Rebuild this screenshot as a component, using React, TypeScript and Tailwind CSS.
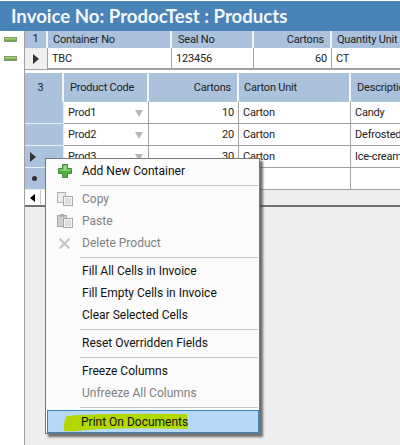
import { X } from 'lucide-react';

const font = { fontFamily: 'Roboto, sans-serif' };

function Minus() {
  return <div className="h-[5px] w-[13px] border border-[#7f9a6a] bg-gradient-to-b from-[#b5dc8c] to-[#5f9e3c]" />;
}

function Arrow() {
  return (
    <svg width="6" height="10" viewBox="0 0 6 10" className="block">
      <path d="M0 0 L6 5 L0 10 Z" fill="#333" />
    </svg>
  );
}

function Head({ w, align, pl, children }: { w: string; align?: string; pl?: string; children?: React.ReactNode }) {
  return (
    <div className={`${w} ${align ?? ''} ${pl ?? 'pl-[5px]'} shrink-0 flex items-center border-r-2 border-[#f1f4f8] bg-[#abc1dc] pt-px pr-[6px] whitespace-nowrap overflow-hidden`}>
      {children}
    </div>
  );
}

function Cell({ w, right, children }: { w: string; right?: boolean; children?: React.ReactNode }) {
  return (
    <div className={`${w} ${right ? 'justify-end pr-[4px]' : 'pl-[4px]'} shrink-0 flex items-center border-r border-b border-[#a0a0a0] bg-white pt-[2px] whitespace-nowrap overflow-hidden`}>
      {children}
    </div>
  );
}

function DetailRow({ code, cartons, unit, desc, mark }: { code?: string; cartons?: string; unit?: string; desc?: string; mark?: React.ReactNode }) {
  return (
    <div className="flex h-[22px]">
      <div className="flex w-[39px] shrink-0 items-center border-r border-b border-[#e8eef5] bg-[#abc1dc] pl-[5px]">{mark}</div>
      <Cell w="w-[85px]">
        {code && (
          <div className="flex w-full items-center justify-between pr-[5px]">
            <span>{code}</span>
            <span className="h-0 w-0 border-x-[4px] border-t-[7px] border-x-transparent border-t-[#b8b8b8]" />
          </div>
        )}
      </Cell>
      <Cell w="w-[90px]" right>{cartons}</Cell>
      <Cell w="w-[112px]">{unit}</Cell>
      <Cell w="w-[60px]">{desc}</Cell>
    </div>
  );
}

function Sep() {
  return <div className="mt-[3px] mb-[2px] ml-[33px] mr-[1px] h-px bg-[#c8c8c8]" />;
}

function Item({ label, disabled, icon }: { label: string; disabled?: boolean; icon?: React.ReactNode }) {
  return (
    <div className={`flex h-[22px] items-center ${disabled ? 'text-[#808080]' : 'text-[#111]'}`}>
      <div className="flex w-[35px] shrink-0 items-center justify-center">{icon}</div>
      <span>{label}</span>
    </div>
  );
}

function PlusIcon() {
  return (
    <svg width="14" height="14" viewBox="0 0 14 14" className="block">
      <path d="M4.5 0.5 H9.5 V4.5 H13.5 V9.5 H9.5 V13.5 H4.5 V9.5 H0.5 V4.5 H4.5 Z" fill="#55b043" stroke="#3f8f3a" />
      <path d="M5.5 1.5 H8.5 V5.5 H12.5 V6.5 H1.5 V5.5 H5.5 Z" fill="#9bdc86" />
    </svg>
  );
}

function DocIcon({ clip }: { clip?: boolean }) {
  return (
    <svg width="16" height="14" viewBox="0 0 16 14" className="block">
      {clip && <rect x="0.5" y="1.5" width="9" height="11" fill="#d0d0d0" stroke="#a8a8a8" />}
      {clip && <rect x="3" y="0" width="4" height="3" fill="#b0b0b0" />}
      {!clip && <rect x="0.5" y="0.5" width="8" height="10" fill="#ececec" stroke="#b0b0b0" />}
      <rect x="6.5" y="4.5" width="9" height="9" fill="#f4f4f4" stroke="#a8a8a8" />
      <path d="M8 7 H14 M8 9 H14 M8 11 H14" stroke="#c4c4c4" />
    </svg>
  );
}

export default function App() {
  return (
    <div className="relative h-[445px] w-[400px] overflow-hidden bg-white text-[12px] text-[#222]" style={font}>
      <div className="mt-px flex h-[30px] items-center bg-[#4a83b7] pl-[11px] text-[18.6px] leading-none font-bold text-[#f2f7fb]" style={{ fontFamily: 'Lato, sans-serif' }}>
        Invoice No: ProdocTest : Products
      </div>

      <div className="flex h-[414px]">
        <div className="flex w-[24px] shrink-0 flex-col gap-[14px] pt-[6px] pl-[4px]">
          <Minus />
          <Minus />
        </div>

        <div className="flex min-w-0 flex-1 flex-col border-l border-[#a0a0a0] bg-[#eeeeee] text-[11px] tracking-[-0.2px]">
          {/* container grid */}
          <div className="flex h-[17px]">
            <div className="flex w-[23px] shrink-0 items-center justify-center border-r-2 border-[#f1f4f8] bg-[#abc1dc]">1</div>
            <Head w="w-[124px]">Container No</Head>
            <Head w="w-[82px]" pl="pl-[6px]">Seal No</Head>
            <Head w="w-[78px]" align="justify-end">Cartons</Head>
            <Head w="w-[80px]">Quantity Unit</Head>
          </div>
          <div className="flex h-[22px] border-b border-[#a0a0a0]">
            <div className="flex w-[23px] shrink-0 items-center justify-center border-r border-[#a0a0a0] bg-[#f0f0f0]"><Arrow /></div>
            <Cell w="w-[124px]">TBC</Cell>
            <Cell w="w-[82px]">123456</Cell>
            <Cell w="w-[78px]" right>60</Cell>
            <Cell w="w-[80px]">CT</Cell>
          </div>

          <div className="h-[3px] bg-white" />

          {/* product grid */}
          <div className="flex h-[29px]">
            <Head w="w-[39px]" pl="justify-center">3</Head>
            <Head w="w-[85px]" pl="pl-[6px]">Product Code</Head>
            <Head w="w-[90px]" align="justify-end">Cartons</Head>
            <Head w="w-[112px]">Carton Unit</Head>
            <Head w="w-[60px]" pl="pl-[6px]">Description</Head>
          </div>
          <DetailRow code="Prod1" cartons="10" unit="Carton" desc="Candy" />
          <DetailRow code="Prod2" cartons="20" unit="Carton" desc="Defrosted" />
          <DetailRow code="Prod3" cartons="30" unit="Carton" desc="Ice-cream" mark={<Arrow />} />
          <DetailRow mark={<span className="ml-[2px] block h-[5px] w-[5px] rounded-full bg-[#333]" />} />

          {/* scroll bar */}
          <div className="flex h-[17px] border-b-2 border-[#707070] bg-[#eeeeee]">
            <div className="flex w-[16px] items-center justify-center border-r border-[#c8c8c8] bg-white">
              <span className="h-0 w-0 border-y-[4px] border-r-[5px] border-y-transparent border-r-black" />
            </div>
            <div className="w-[5px] border-r border-[#c8c8c8] bg-white" />
          </div>
        </div>
      </div>

      {/* context menu */}
      <div className="absolute top-[158px] left-[45px] h-[276px] w-[215px] border border-[#777] bg-[#fbfbfb] py-px pl-px shadow-[3px_3px_2px_rgba(70,70,70,0.75)]">
        <Item label="Add New Container" icon={<PlusIcon />} />
        <Sep />
        <Item label="Copy" disabled icon={<DocIcon />} />
        <Item label="Paste" disabled icon={<DocIcon clip />} />
        <Item label="Delete Product" disabled icon={<X size={17} strokeWidth={3} className="text-[#c4c4c4]" />} />
        <Sep />
        <Item label="Fill All Cells in Invoice" />
        <Item label="Fill Empty Cells in Invoice" />
        <Item label="Clear Selected Cells" />
        <Sep />
        <Item label="Reset Overridden Fields" />
        <Sep />
        <Item label="Freeze Columns" />
        <Item label="Unfreeze All Columns" disabled />
        <Sep />
        <div className="relative flex h-[23px] items-center border border-[#3a85bd] bg-[#b5d7f8] pl-[33px] text-[#111]">
          <svg width="126" height="19" viewBox="0 0 126 19" className="absolute top-[2px] left-[15px]">
            <path d="M4 3 Q30 0 124 1 L125 16 Q60 14 24 17 Q8 19 1 18 Q0 8 4 3 Z" fill="#b2d800" />
          </svg>
          <span className="relative">Print On Documents</span>
        </div>
      </div>
    </div>
  );
}
